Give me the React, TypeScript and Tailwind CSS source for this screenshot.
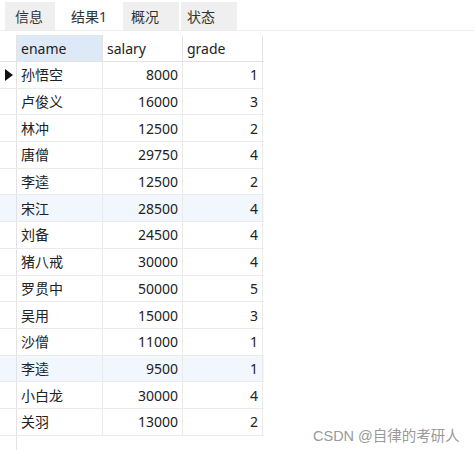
const rows: [string, number, number][] = [
  ['孙悟空', 8000, 1],
  ['卢俊义', 16000, 3],
  ['林冲', 12500, 2],
  ['唐僧', 29750, 4],
  ['李逵', 12500, 2],
  ['宋江', 28500, 4],
  ['刘备', 24500, 4],
  ['猪八戒', 30000, 4],
  ['罗贯中', 50000, 5],
  ['吴用', 15000, 3],
  ['沙僧', 11000, 1],
  ['李逵', 9500, 1],
  ['小白龙', 30000, 4],
  ['关羽', 13000, 2],
];

const tabs = [
  { label: '信息', cls: 'w-[50px] pl-[10px]', active: false },
  { label: '结果1', cls: 'w-[64px] pl-[14px]', active: true },
  { label: '概况', cls: 'w-[56px] pl-[8px]', active: false },
  { label: '状态', cls: 'w-[56px] pl-[6px]', active: false },
];

const highlighted = [5, 11];

const App = () => {
  return (
    <div
      className="relative w-[474px] h-[450px] bg-white text-[14px] text-[#222] overflow-hidden"
      style={{ fontFamily: '"Noto Sans", "Noto Sans CJK SC", sans-serif' }}
    >
      {/* tab strip */}
      <div className="flex items-end gap-[2px] h-[31px] pl-[5px] border-b border-[#ececec]">
        {tabs.map((t) => (
          <div
            key={t.label}
            className={`${t.cls} h-[28px] flex items-center text-[14px] text-[#333] ${
              t.active ? 'bg-white' : 'bg-[#efefef]'
            }`}
          >
            {t.label}
          </div>
        ))}
      </div>

      {/* result grid */}
      <div className="mt-[4px] w-[264px]">
        <div className="flex h-[27px] border-b border-[#e3e3e3]">
          <div className="w-[17px] border-r border-[#e3e3e3]" />
          <div className="w-[86px] bg-[#dde9f6] border-r border-[#e3e3e3] flex items-center pl-[4px]">ename</div>
          <div className="w-[80px] border-r border-[#e3e3e3] flex items-center pl-[4px]">salary</div>
          <div className="w-[80px] border-r border-[#e3e3e3] flex items-center pl-[4px]">grade</div>
        </div>
        {rows.map(([name, salary, grade], i) => (
          <div
            key={i}
            className={`flex h-[26.7px] border-b border-[#ebebeb] ${
              highlighted.includes(i) ? 'bg-[#f2f7fd]' : 'bg-white'
            }`}
          >
            <div className="w-[17px] border-r border-[#e3e3e3] flex items-center pl-[5px]">
              {i === 0 && (
                <svg width="8" height="12" viewBox="0 0 8 12">
                  <path d="M0 0 L8 6 L0 12 Z" fill="#111" />
                </svg>
              )}
            </div>
            <div className="w-[86px] border-r border-[#ebebeb] flex items-center pl-[4px]">{name}</div>
            <div className="w-[80px] border-r border-[#ebebeb] flex items-center justify-end pr-[4px]">{salary}</div>
            <div className="w-[80px] border-r border-[#ebebeb] flex items-center justify-end pr-[4px]">{grade}</div>
          </div>
        ))}
        <div className="flex h-[14px]">
          <div className="w-[17px] border-r border-[#e3e3e3]" />
        </div>
      </div>

      <div
        className="absolute left-[313px] top-[426px] text-[14.5px] text-[#9a9a9a]"
        style={{ fontFamily: '"Liberation Sans", "Noto Sans CJK SC", sans-serif' }}
      >
        CSDN @自律的考研人
      </div>
    </div>
  );
};

export default App;
